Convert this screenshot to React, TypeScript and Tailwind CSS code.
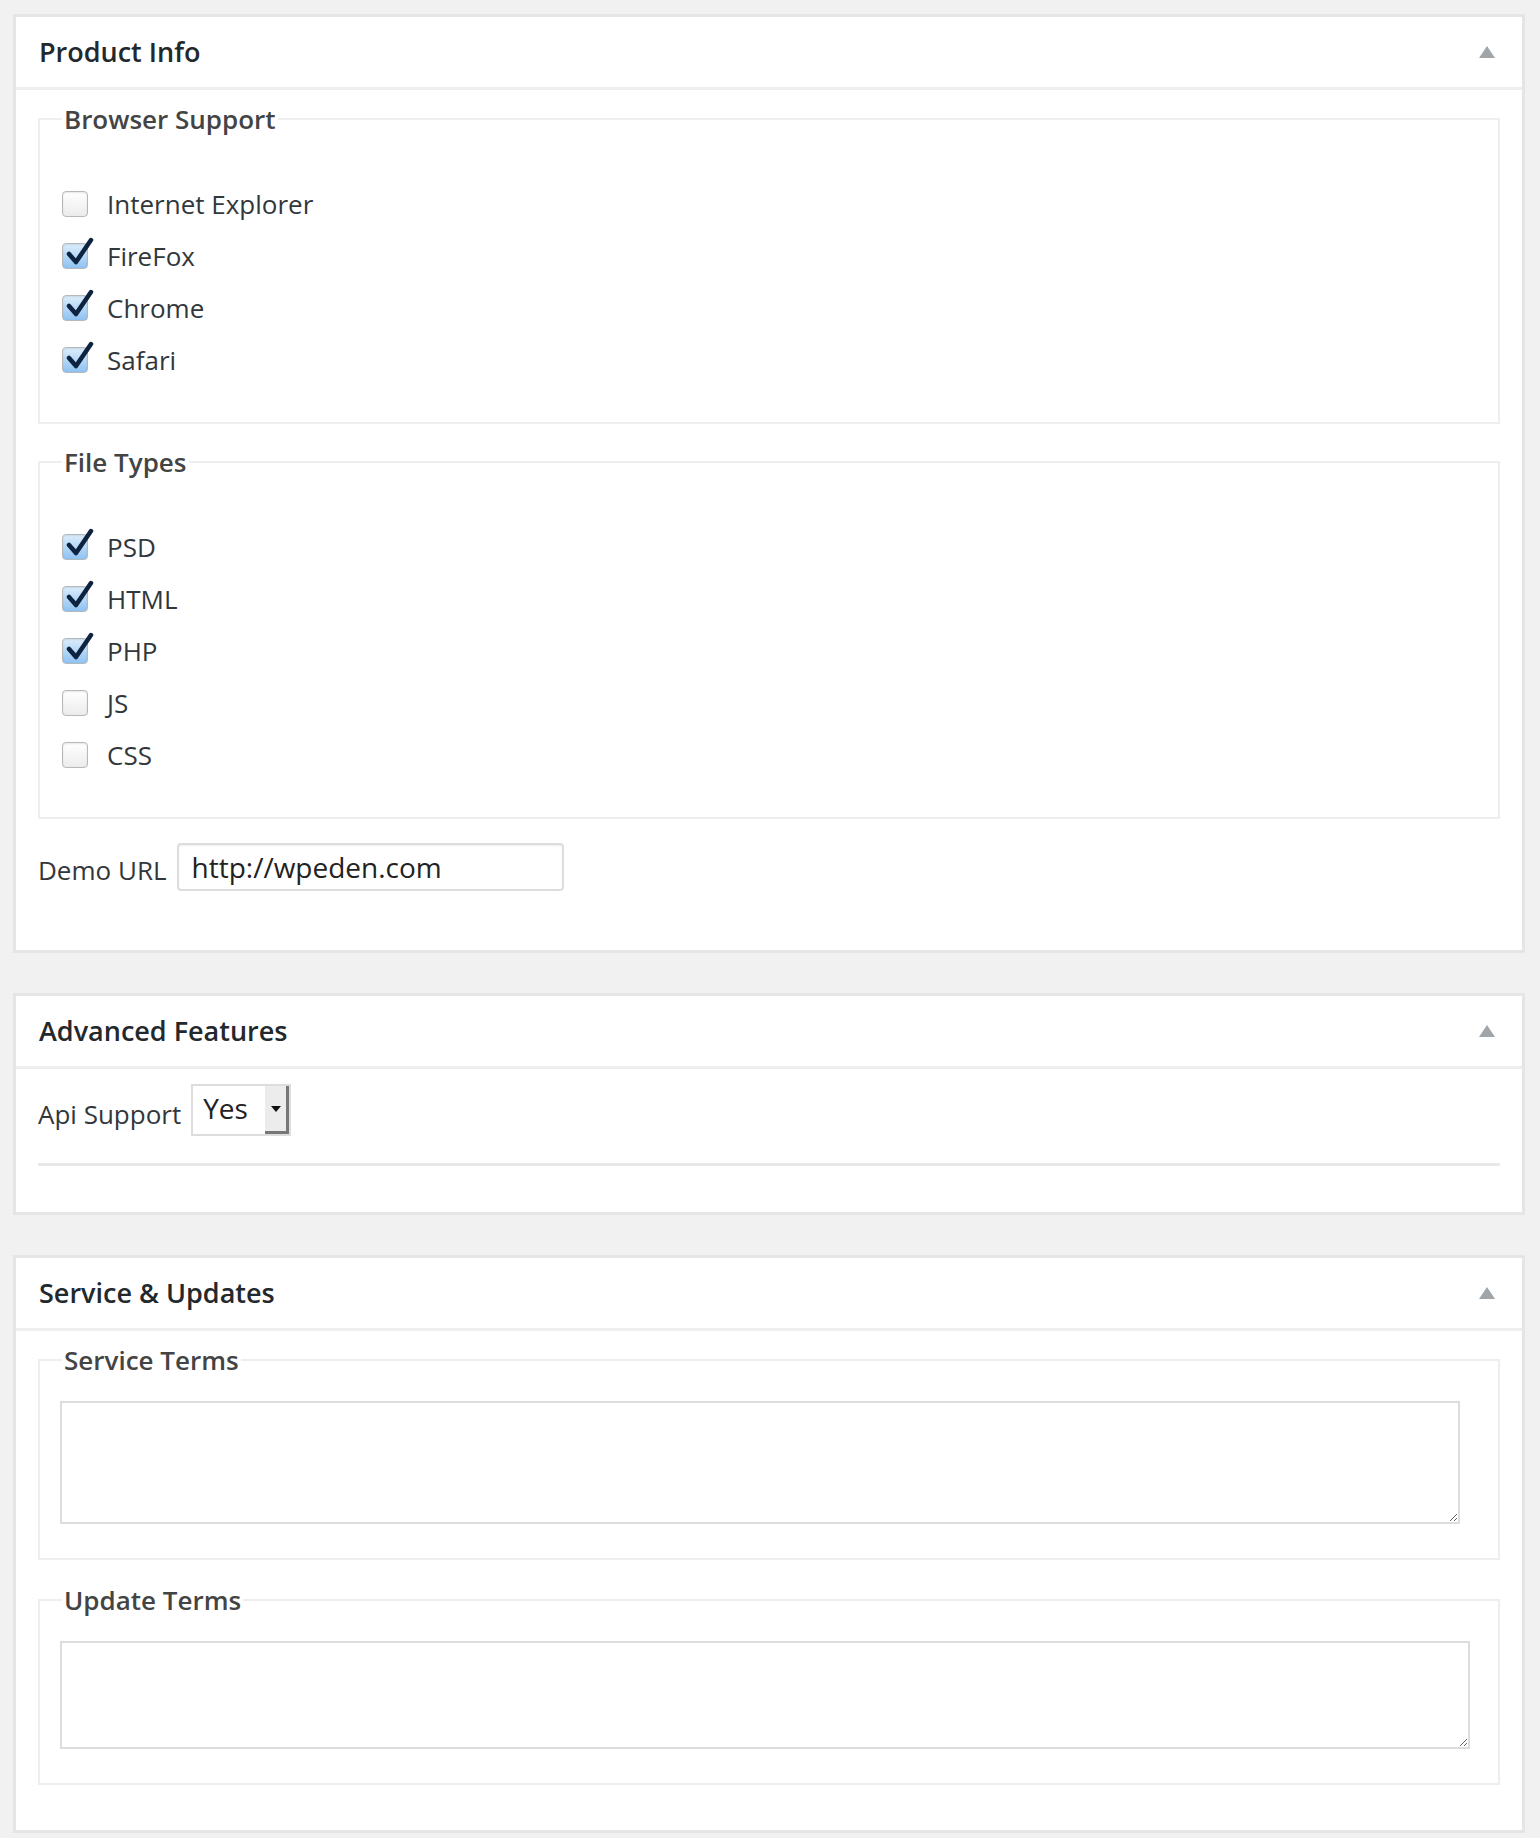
const font = { fontFamily: '"Open Sans", "Liberation Sans", sans-serif' }

function Box({ checked }: { checked: boolean }) {
  return (
    <span className="relative inline-block w-[26px] h-[26px] rounded-[4px] border border-[#b4b9be] shadow-[inset_0_1px_2px_rgba(0,0,0,0.1)]"
      style={{ background: checked ? "linear-gradient(#ddeefc,#8fc2f2)" : "linear-gradient(#fff,#ececec)" }}>
      {checked && (
        <svg viewBox="0 0 30 30" className="absolute left-[1px] top-[-8px] w-[30px] h-[32px]">
          <path d="M5 17 L12 25 L27 3" fill="none" stroke="#0d2340" strokeWidth="4.5" strokeLinecap="round" strokeLinejoin="round" />
        </svg>
      )}
    </span>
  )
}

function Check({ label, checked }: { label: string; checked: boolean }) {
  return (
    <div className="flex items-center h-[52px] gap-[19px]">
      <Box checked={checked} />
      <span className="text-[26px] text-[#32373c]">{label}</span>
    </div>
  )
}

function Header({ title }: { title: string }) {
  return (
    <div className="flex items-center justify-between h-[73px] border-b-[3px] border-[#eeeeee] pl-[23px] pr-[27px]">
      <h2 className="text-[27px] font-semibold text-[#23282d]">{title}</h2>
      <span className="w-0 h-0 border-l-[8px] border-r-[8px] border-b-[12px] border-l-transparent border-r-transparent border-b-[#a0a5aa]" />
    </div>
  )
}

function Field({ legend, children, className }: { legend: string; children: React.ReactNode; className?: string }) {
  return (
    <fieldset className={"border-2 border-[#eeeeee] px-[22px] " + (className ?? "")}>
      <legend className="px-[2px] text-[26px] font-semibold text-[#444] leading-[32px]">{legend}</legend>
      {children}
    </fieldset>
  )
}

export default function App() {
  return (
    <div className="min-h-screen bg-[#f1f1f1] pt-[14px] pl-[13px] pr-[15px] pb-[10px]" style={font}>
      <div className="bg-white border-[3px] border-[#e5e5e5]">
        <Header title="Product Info" />
        <div className="px-[22px] pt-[13px] pb-[59px]">
          <Field legend="Browser Support" className="pt-[43px] pb-[36px]">
            <Check label="Internet Explorer" checked={false} />
            <Check label="FireFox" checked />
            <Check label="Chrome" checked />
            <Check label="Safari" checked />
          </Field>
          <Field legend="File Types" className="mt-[22px] pt-[43px] pb-[36px]">
            <Check label="PSD" checked />
            <Check label="HTML" checked />
            <Check label="PHP" checked />
            <Check label="JS" checked={false} />
            <Check label="CSS" checked={false} />
          </Field>
          <div className="flex items-center gap-[10px] mt-[24px]">
            <span className="text-[26px] text-[#32373c] mt-[6px]">Demo URL</span>
            <div className="w-[387px] h-[48px] border-2 border-[#dddddd] rounded-[4px] shadow-[inset_0_1px_2px_rgba(0,0,0,0.07)] px-[13px] flex items-center text-[28px] text-[#222]">http://wpeden.com</div>
          </div>
        </div>
      </div>

      <div className="bg-white border-[3px] border-[#e5e5e5] mt-[40px]">
        <Header title="Advanced Features" />
        <div className="px-[22px] pt-[15px] pb-[46px]">
          <div className="flex items-center gap-[10px] pb-[27px] border-b-[3px] border-[#e8e8e8]">
            <span className="text-[26px] text-[#32373c] mt-[8px]">Api Support</span>
            <div className="flex w-[100px] h-[52px] border-2 border-[#dddddd]">
              <span className="flex-1 pl-[10px] text-[28px] text-[#222] leading-[44px]">Yes</span>
              <span className="w-[24px] bg-[#ececec] border-r-[3px] border-b-[3px] border-[#777] flex items-center justify-center">
                <span className="w-0 h-0 border-l-[5px] border-r-[5px] border-t-[6px] border-l-transparent border-r-transparent border-t-[#111]" />
              </span>
            </div>
          </div>
        </div>
      </div>

      <div className="bg-white border-[3px] border-[#e5e5e5] mt-[40px]">
        <Header title="Service & Updates" />
        <div className="px-[22px] pt-[13px] pb-[45px]">
          <Field legend="Service Terms" className="pt-[25px] pb-[34px]">
            <textarea className="block w-[1400px] max-w-full h-[123px] border-2 border-[#dddddd] -ml-[2px]" />
          </Field>
          <Field legend="Update Terms" className="mt-[24px] pt-[25px] pb-[34px]">
            <textarea className="block w-[1410px] max-w-full h-[108px] border-2 border-[#dddddd] -ml-[2px]" />
          </Field>
        </div>
      </div>
    </div>
  )
}
